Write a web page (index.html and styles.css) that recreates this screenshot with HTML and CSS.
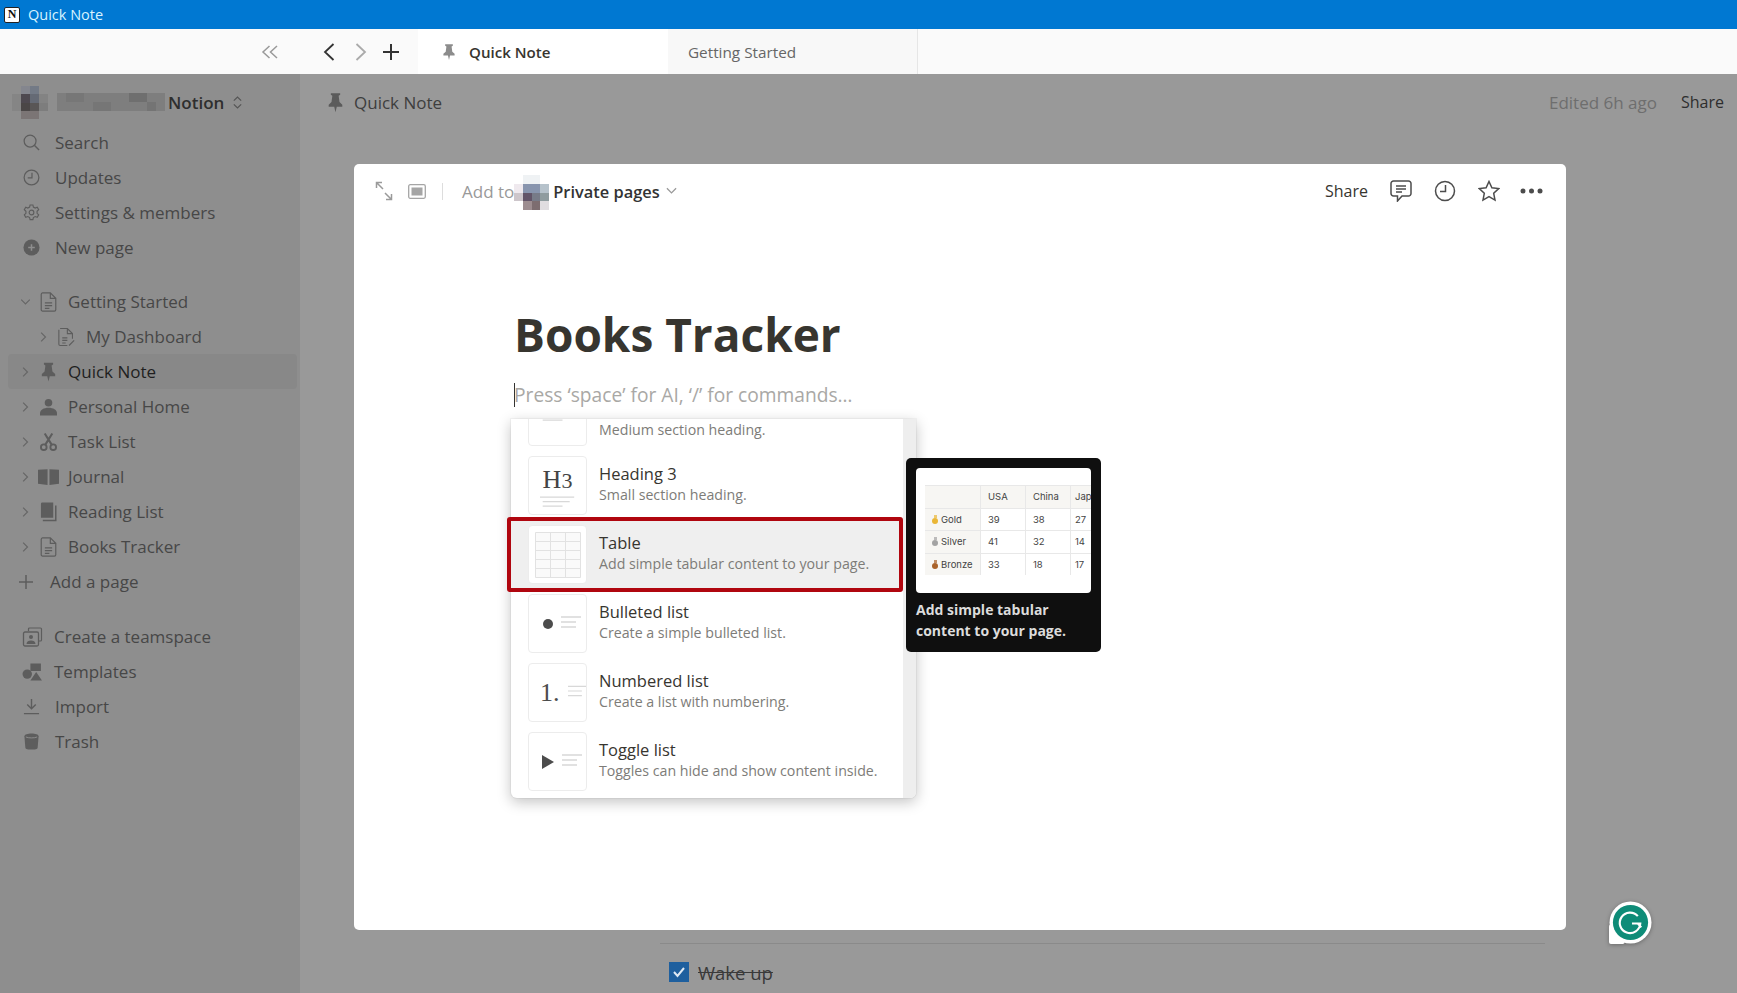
FILE: index.html
```html
<!DOCTYPE html>
<html lang="en">
<head>
<meta charset="utf-8">
<title>Quick Note</title>
<link rel="stylesheet" href="styles.css">
</head>
<body>
<svg class="defs" width="0" height="0" aria-hidden="true">
  <symbol id="chev" viewBox="0 0 14 14"><path d="M4 1.5 9.5 7 4 12.5" fill="none" stroke="currentColor" stroke-width="1.5"/></symbol>
  <symbol id="pin" viewBox="0 0 20 24"><path d="M4.5 1h11v2l-1.8 1.2 1 7.3 3.3 3V17h-6.5L10 23.5 8.500 17H2v-2.500l3.300-3 1-7.300L4.500 3z" fill="currentColor"/></symbol>
  <symbol id="doc" viewBox="0 0 18 22"><path d="M2.500 1h8.500l6 6v12.500a1.500 1.500 0 0 1-1.500 1.500h-13a1.500 1.500 0 0 1-1.500-1.500v-17A1.500 1.500 0 0 1 2.500 1zM11 1v6h6M5 12h8M5 15h8M5 18h5" fill="none" stroke="currentColor" stroke-width="1.300"/></symbol>
</svg>

<header class="titlebar">
  <span class="logo">N</span>
  <span class="app-title">Quick Note</span>
</header>

<nav class="tabbar">
  <div class="tab-tools">
    <svg class="collapse" viewBox="0 0 18 14"><path d="M8.500 1 2 7l6.500 6M16 1 9.500 7l6.500 6" fill="none" stroke="currentColor" stroke-width="1.500"/></svg>
    <svg class="nav-back" viewBox="0 0 12 18"><path d="M10.500 1 2 9l8.500 8" fill="none" stroke="currentColor" stroke-width="1.800"/></svg>
    <svg class="nav-forward" viewBox="0 0 12 18"><path d="M1.500 1 10 9l-8.500 8" fill="none" stroke="currentColor" stroke-width="1.800"/></svg>
    <svg class="nav-add" viewBox="0 0 18 18"><path d="M9 1v16M1 9h16" fill="none" stroke="currentColor" stroke-width="2"/></svg>
  </div>
  <div class="tab tab-active"><svg class="tab-pin"><use href="#pin"/></svg><span>Quick Note</span></div>
  <div class="tab tab-idle"><span>Getting Started</span></div>
</nav>

<div class="workspace">
  <aside class="sidebar">
    <div class="ws-head">
      <svg class="ws-avatar" viewBox="0 0 4 4" preserveAspectRatio="none" shape-rendering="crispEdges">
        <rect x="1" width="1" height="1" fill="#84868e"/><rect x="2" width="1" height="1" fill="#737a86"/><rect y="1" width="1" height="2" fill="#858585"/>
        <rect x="1" y="1" width="1" height="1" fill="#4e4950"/><rect x="2" y="1" width="1" height="1" fill="#656a75"/>
        <rect x="3" y="1" width="1" height="1" fill="#838383"/><rect x="1" y="2" width="1" height="1" fill="#4a4646"/>
        <rect x="2" y="2" width="1" height="1" fill="#595656"/><rect x="3" y="2" width="1" height="1" fill="#7d7d7d"/><rect x="1" y="3" width="2" height="1" fill="#7b7575"/>
      </svg>
      <svg class="ws-blur" viewBox="0 0 12 2" preserveAspectRatio="none" shape-rendering="crispEdges">
        <rect width="12" height="2" fill="#7e7e7e"/><rect x="1" width="2" height="1" fill="#777"/><rect x="4" y="1" width="2" height="1" fill="#767676"/>
        <rect x="8" width="2" height="1" fill="#6f6f6f"/><rect x="10" y="1" width="1" height="1" fill="#747474"/>
      </svg>
      <span class="ws-name">Notion</span>
      <svg class="ws-updown" viewBox="0 0 12 14"><path d="M2 5l4-4 4 4M2 9l4 4 4-4" fill="none" stroke="currentColor" stroke-width="1.300"/></svg>
    </div>

    <ul class="nav-list">
      <li class="row"><svg class="ico" viewBox="0 0 18 18"><circle cx="7.500" cy="7.500" r="6.300" fill="none" stroke="currentColor" stroke-width="1.300"/><path d="M12 12l5 5" stroke="currentColor" stroke-width="1.500"/></svg><span>Search</span></li>
      <li class="row"><svg class="ico" viewBox="0 0 18 18"><circle cx="9" cy="9" r="7.800" fill="none" stroke="currentColor" stroke-width="1.300"/><path d="M9.500 4v5.500H5" fill="none" stroke="currentColor" stroke-width="1.300"/></svg><span>Updates</span></li>
      <li class="row"><svg class="ico" viewBox="0 0 18 18"><path d="M7.500 1h3l.5 2.300 1.900 1 2.200-.8 1.500 2.600-1.700 1.600v2.200l1.700 1.600-1.500 2.600-2.200-.8-1.900 1-.5 2.300h-3l-.5-2.300-1.900-1-2.200.8-1.500-2.600 1.700-1.600V7.700L1.400 6.100l1.500-2.600 2.200.8 1.900-1z" fill="none" stroke="currentColor" stroke-width="1.200"/><circle cx="9" cy="9" r="2.500" fill="none" stroke="currentColor" stroke-width="1.200"/></svg><span>Settings &amp; members</span></li>
      <li class="row"><svg class="ico" viewBox="0 0 18 18"><circle cx="9" cy="9" r="8.500" fill="currentColor"/><path d="M9 5.500v7M5.500 9h7" stroke="#8e8e8e" stroke-width="1.600"/></svg><span>New page</span></li>
    </ul>

    <ul class="nav-list tree">
      <li class="row tree-row"><svg class="chev chev-open"><use href="#chev"/></svg><svg class="ico-doc"><use href="#doc"/></svg><span>Getting Started</span></li>
      <li class="row tree-row tree-child"><svg class="chev"><use href="#chev"/></svg><svg class="ico-doc" viewBox="0 0 20 22"><path d="M2.500 1h8.500l6 6v6M11 1v6h6M1 2.500v17A1.500 1.500 0 0 0 2.500 21H11M5 12h6M5 15h6M5 18h4M13 21l6-6" fill="none" stroke="currentColor" stroke-width="1.300"/></svg><span>My Dashboard</span></li>
      <li class="row tree-row row-current"><svg class="chev"><use href="#chev"/></svg><svg class="ico-doc"><use href="#pin"/></svg><span>Quick Note</span></li>
      <li class="row tree-row"><svg class="chev"><use href="#chev"/></svg><svg class="ico-doc" viewBox="0 0 18 18"><circle cx="9" cy="4.500" r="4" fill="currentColor"/><path d="M0 18v-2.500C0 12 4 9.800 9 9.800s9 2.200 9 5.700V18z" fill="currentColor"/></svg><span>Personal Home</span></li>
      <li class="row tree-row"><svg class="chev"><use href="#chev"/></svg><svg class="ico-doc" viewBox="0 0 18 20"><circle cx="4" cy="15.500" r="3" fill="none" stroke="currentColor" stroke-width="2"/><circle cx="14" cy="15.500" r="3" fill="none" stroke="currentColor" stroke-width="2"/><path d="M5.500 13 13 1M12.500 13 5 1" stroke="currentColor" stroke-width="2.200"/></svg><span>Task List</span></li>
      <li class="row tree-row"><svg class="chev"><use href="#chev"/></svg><svg class="ico-doc ico-wide" viewBox="0 0 22 18"><path d="M0 1.500 10 1v16.500L0 16zM12 1l10 .5V16l-10 1.500z" fill="currentColor"/></svg><span>Journal</span></li>
      <li class="row tree-row"><svg class="chev"><use href="#chev"/></svg><svg class="ico-doc" viewBox="0 0 18 20"><path d="M1 1.500A1.500 1.500 0 0 1 2.500 0H14v16H1z" fill="currentColor"/><path d="M16.700 3v16H3" fill="none" stroke="currentColor" stroke-width="1.600"/></svg><span>Reading List</span></li>
      <li class="row tree-row"><svg class="chev"><use href="#chev"/></svg><svg class="ico-doc"><use href="#doc"/></svg><span>Books Tracker</span></li>
      <li class="row add-row"><svg class="add-plus" viewBox="0 0 14 14"><path d="M7 0v14M0 7h14" stroke="currentColor" stroke-width="1.500"/></svg><span>Add a page</span></li>
    </ul>

    <ul class="nav-list extras">
      <li class="row"><svg class="ico ico-lg" viewBox="0 0 20 20"><path d="M6 4V2a1 1 0 0 1 1-1h11a1 1 0 0 1 1 1v11a1 1 0 0 1-1 1h-2" fill="none" stroke="currentColor" stroke-width="1.200"/><rect x="1" y="5" width="15" height="14" rx="1.500" fill="none" stroke="currentColor" stroke-width="1.300"/><circle cx="8.500" cy="10" r="2" fill="currentColor"/><path d="M4 17c0-2.500 2-3.500 4.500-3.500S13 14.500 13 17z" fill="currentColor"/></svg><span>Create a teamspace</span></li>
      <li class="row"><svg class="ico ico-lg" viewBox="0 0 20 18"><circle cx="5" cy="11" r="4.500" fill="currentColor"/><path d="M8 1h10v7H8zM13.500 9 19 17H8z" fill="currentColor"/></svg><span>Templates</span></li>
      <li class="row"><svg class="ico" viewBox="0 0 18 18"><path d="M9 1v10M4.500 7 9 11.500 13.500 7M1 16.500h16" fill="none" stroke="currentColor" stroke-width="1.500"/></svg><span>Import</span></li>
      <li class="row"><svg class="ico" viewBox="0 0 18 18"><path d="M1.500 3.500C1.500 1.500 5 .5 9 .5s7.500 1 7.500 3l-1 12c-.2 1.700-3 2-6.500 2s-6.300-.3-6.500-2z" fill="currentColor"/><path d="M3 4.200c1.500.7 3.500 1 6 1s4.500-.3 6-1" fill="none" stroke="#8e8e8e" stroke-width="1"/></svg><span>Trash</span></li>
    </ul>
  </aside>

  <main class="content">
    <div class="topbar">
      <svg class="top-pin"><use href="#pin"/></svg>
      <span class="crumb">Quick Note</span>
      <span class="edited">Edited 6h ago</span>
      <span class="top-share">Share</span>
    </div>
    <div class="behind">
      <hr class="behind-rule">
      <div class="todo">
        <svg class="todo-box" viewBox="0 0 20 20"><rect width="20" height="20" fill="#1e5f9e"/><path d="M5 10l3.500 4L15 6" fill="none" stroke="#dfe9f3" stroke-width="2"/></svg>
        <s>Wake up</s>
      </div>
    </div>
  </main>

  <section class="modal">
    <div class="modal-head">
      <svg class="m-expand" viewBox="0 0 18 20"><path d="M8 8 1.500 1.500M1.500 7V1.500H7M10 12l6.500 6.500M16.500 13v5.500H11" fill="none" stroke="currentColor" stroke-width="1.500"/></svg>
      <svg class="m-panel" viewBox="0 0 18 15"><rect x=".7" y=".7" width="16.600" height="13.600" rx="1.500" fill="none" stroke="currentColor" stroke-width="1.300"/><rect x="3.500" y="3.500" width="11" height="8" fill="currentColor"/></svg>
      <i class="m-sep"></i>
      <span class="m-addto">Add to</span>
      <svg class="m-avatar" viewBox="0 0 4 4" shape-rendering="crispEdges">
        <rect x="1" width="2" height="1" fill="#eff2f4"/><rect y="1" width="1" height="1" fill="#efe9ee"/><rect x="1" y="1" width="2" height="1" fill="#8895ae"/><rect x="3" y="1" width="1" height="1" fill="#b6c2cb"/>
        <rect y="2" width="1" height="1" fill="#cdc6cb"/><rect x="1" y="2" width="1" height="1" fill="#625468"/><rect x="2" y="2" width="1" height="1" fill="#777b88"/><rect x="3" y="2" width="1" height="1" fill="#8f9c9f"/>
        <rect x="1" y="3" width="1" height="1" fill="#9d8d90"/><rect x="2" y="3" width="1" height="1" fill="#7d6d70"/><rect x="3" y="3" width="1" height="1" fill="#e0dde0"/>
      </svg>
      <span class="m-private">Private pages</span>
      <svg class="m-caret" viewBox="0 0 12 8"><path d="M1 1l5 5 5-5" fill="none" stroke="currentColor" stroke-width="1.400"/></svg>
      <span class="m-share">Share</span>
      <svg class="m-action" viewBox="0 0 22 22"><path d="M3.500 1h15A2.500 2.500 0 0 1 21 3.500v10a2.500 2.500 0 0 1-2.500 2.500H12l-4.500 5v-5h-4A2.500 2.500 0 0 1 1 13.500v-10A2.500 2.500 0 0 1 3.500 1zM6 6h10M6 9h10M6 12h6" fill="none" stroke="currentColor" stroke-width="1.500"/></svg>
      <svg class="m-action" viewBox="0 0 22 22"><circle cx="11" cy="11" r="9.500" fill="none" stroke="currentColor" stroke-width="1.500"/><path d="M11.500 5v6.500H6" fill="none" stroke="currentColor" stroke-width="1.500"/></svg>
      <svg class="m-action" viewBox="0 0 22 22"><path d="M11 1.500l2.900 6.300 6.800.8-5 4.700 1.300 6.800-6-3.400-6 3.400 1.300-6.800-5-4.700 6.800-.8z" fill="none" stroke="currentColor" stroke-width="1.500"/></svg>
      <svg class="m-dots" viewBox="0 0 23 6"><circle cx="3" cy="3" r="2.500" fill="currentColor"/><circle cx="11.500" cy="3" r="2.500" fill="currentColor"/><circle cx="20" cy="3" r="2.500" fill="currentColor"/></svg>
    </div>
    <div class="page">
      <h1 class="page-title">Books Tracker</h1>
      <p class="placeholder">Press ‘space’ for AI, ‘/’ for commands…</p>
    </div>

    <div class="menu">
      <div class="menu-scroll">
        <div class="item item-cut">
          <div class="thumb"><svg class="thumb-lines" viewBox="0 0 40 14"><path d="M0 1h38M3 6h30M3 11h22" stroke="#d8d8d8" stroke-width="1.200"/></svg></div>
          <div class="item-text item-text-cut"><small>Medium section heading.</small></div>
        </div>
        <div class="item">
          <div class="thumb thumb-h3"><span>H<em>3</em></span><svg class="thumb-lines" viewBox="0 0 40 14"><path d="M0 1h38M3 6h30M3 11h22" stroke="#d8d8d8" stroke-width="1.200"/></svg></div>
          <div class="item-text"><b>Heading 3</b><small>Small section heading.</small></div>
        </div>
        <div class="item item-on">
          <div class="thumb"><svg class="thumb-table" viewBox="0 0 46 46"><path d="M.5.500h45v45H.500zM0 9.500h46M0 18.500h46M0 27.500h46M0 36.500h46M15.500 0v46M30.500 0v46" fill="#fafafa" stroke="#e2e2e2"/></svg></div>
          <div class="item-text"><b>Table</b><small>Add simple tabular content to your page.</small></div>
        </div>
        <div class="item">
          <div class="thumb thumb-row"><i class="bullet"></i><svg class="side-lines" viewBox="0 0 20 12"><path d="M0 1h20M0 6h15M0 11h15" stroke="#d8d8d8" stroke-width="1.300"/></svg></div>
          <div class="item-text"><b>Bulleted list</b><small>Create a simple bulleted list.</small></div>
        </div>
        <div class="item">
          <div class="thumb thumb-row"><span class="numeral">1.</span><svg class="side-lines" viewBox="0 0 20 12"><path d="M0 1h20M0 6h15M0 11h15" stroke="#d8d8d8" stroke-width="1.300"/></svg></div>
          <div class="item-text"><b>Numbered list</b><small>Create a list with numbering.</small></div>
        </div>
        <div class="item">
          <div class="thumb thumb-row"><svg class="tri" viewBox="0 0 12 14"><path d="M0 0l12 7-12 7z" fill="#4c4c4c"/></svg><svg class="side-lines" viewBox="0 0 20 12"><path d="M0 1h20M0 6h15M0 11h15" stroke="#d8d8d8" stroke-width="1.300"/></svg></div>
          <div class="item-text"><b>Toggle list</b><small>Toggles can hide and show content inside.</small></div>
        </div>
      </div>
      <div class="menu-track"></div>
    </div>
    <div class="menu-mark"></div>

    <aside class="tip">
      <div class="tip-shot">
        <div class="mini">
          <span class="mc mh"></span><span class="mc mh">USA</span><span class="mc mh">China</span><span class="mc mh">Jap</span>
          <span class="mc mh"><i class="medal m-gold"></i>Gold</span><span class="mc">39</span><span class="mc">38</span><span class="mc">27</span>
          <span class="mc mh"><i class="medal m-silver"></i>Silver</span><span class="mc">41</span><span class="mc">32</span><span class="mc">14</span>
          <span class="mc mh"><i class="medal m-bronze"></i>Bronze</span><span class="mc">33</span><span class="mc">18</span><span class="mc">17</span>
        </div>
      </div>
      <p class="tip-text">Add simple tabular content to your page.</p>
    </aside>
  </section>

  <div class="grammarly">
    <svg viewBox="0 0 44 44"><circle cx="22" cy="22" r="21.500" fill="#fff"/><rect x="0" y="24" width="16" height="20" rx="2" fill="#fff"/><circle cx="22" cy="22" r="18" fill="#0e8c78"/><path d="M29.500 15.500A10.500 10.500 0 1 0 32 23H23.500m6 0 3.500 4" fill="none" stroke="#fff" stroke-width="2.200"/></svg>
  </div>
</div>
</body>
</html>
```
FILE: styles.css
```css
* { box-sizing: border-box; }
html, body { margin: 0; height: 100%; }
body {
  width: 1737px; height: 993px; overflow: hidden;
  display: flex; flex-direction: column;
  font-family: "Open Sans", "Noto Sans", sans-serif;
  color: #37352f; background: #999;
}
.defs { position: absolute; }
ul { list-style: none; margin: 0; padding: 0; }

.titlebar { height: 29px; flex: none; background: #0078d2; display: flex; align-items: center; padding-left: 4px; gap: 8px; }
.logo {
  width: 16px; height: 16px; background: #fff; border: 1.500px solid #222; border-radius: 2px;
  font: bold 12px/13px "Liberation Serif", serif; color: #111; text-align: center;
}
.app-title { font-size: 14.500px; color: #d8f3ff; }

.tabbar { height: 45px; flex: none; display: flex; background: #fafafa; }
.tab-tools { width: 418px; display: flex; align-items: center; padding-left: 261px; color: #444; }
.collapse { width: 18px; height: 14px; color: #999; }
.nav-back { width: 12px; height: 18px; margin-left: 44px; color: #333; }
.nav-forward { width: 12px; height: 18px; margin-left: 20px; color: #aaa; }
.nav-add { width: 18px; height: 18px; margin-left: 15px; color: #333; }
.tab { width: 250px; display: flex; align-items: center; font-size: 15.300px; }
.tab-active { background: #fff; padding-left: 24px; gap: 13px; color: #37352f; font-weight: 600; font-size: 15.100px; }
.tab-pin { width: 14px; height: 18px; color: #8c8c8c; }
.tab-idle { padding-left: 20px; color: #666; border-right: 1px solid #e6e6e6; background: #f8f8f8; }

.workspace { flex: 1; display: flex; min-height: 0; position: relative; }

.sidebar { width: 300px; flex: none; background: #8e8e8e; color: #474747; font-size: 17px; padding: 0 3px 0 8px; }
.ws-head { height: 51px; display: flex; align-items: center; padding: 5px 0 0 4px; }
.ws-avatar { width: 36px; height: 33px; flex: none; }
.ws-blur { width: 108px; height: 18px; margin-left: 9px; }
.ws-name { margin-left: 3px; font-weight: 600; color: #2e2e2e; }
.ws-updown { width: 11px; height: 13px; margin-left: 8px; color: #555; }

.row { height: 35px; display: flex; align-items: center; gap: 15px; padding-left: 15px; white-space: nowrap; }
.ico { width: 17px; height: 17px; flex: none; color: #5d5d5d; }
.ico-lg { width: 21px; height: 20px; margin-right: -4px; margin-left: -1px; }
.tree { margin-top: 19px; }
.extras { margin-top: 20px; }
.tree-row { padding-left: 12px; gap: 0; }
.chev { width: 11px; height: 12px; color: #666; flex: none; }
.chev-open { transform: rotate(90deg); }
.ico-doc { width: 17px; height: 20px; margin: 0 11px 0 9px; color: #5d5d5d; flex: none; }
.ico-wide { width: 21px; margin: 0 9px 0 7px; }
.tree-child { padding-left: 30px; }
.row-current { background: #888; color: #1f1f1f; border-radius: 4px; font-weight: 500; }
.add-row { padding-left: 11px; gap: 17px; }
.add-plus { width: 14px; height: 14px; color: #5d5d5d; }

.content { flex: 1; display: flex; flex-direction: column; justify-content: space-between; min-width: 0; }
.topbar { height: 58px; display: flex; align-items: center; padding: 0 13px 2px 27px; font-size: 17px; }
.top-pin { width: 17px; height: 21px; color: #5b5b5b; }
.crumb { margin-left: 10px; color: #3e3e3e; flex: 1; }
.edited { color: #6e6e6e; }
.top-share { margin-left: 24px; color: #2e2e2e; font-size: 16px; }
.behind { padding: 0 192px 8px 360px; }
.behind-rule { border: 0; border-top: 1px solid #8a8a8a; margin: 0 0 15px; }
.todo { display: flex; align-items: center; gap: 9px; padding-left: 9px; font-size: 18.500px; color: #3a3a3a; height: 26px; }
.todo-box { width: 20px; height: 20px; }

.modal { position: absolute; left: 354px; top: 90px; width: 1212px; height: 766px; background: #fff; border-radius: 5px; }
.modal-head { height: 54px; display: flex; align-items: center; padding: 0 23px 0 21px; color: #555; }
.m-expand { width: 18px; height: 20px; color: #9a9a9a; }
.m-panel { width: 18px; height: 15px; margin-left: 15px; color: #a5a5a5; }
.m-sep { width: 1px; height: 17px; margin-left: 16px; background: #ddd; }
.m-addto { margin-left: 19px; font-size: 17px; color: #999; }
.m-avatar { width: 35px; height: 35px; margin-top: 2px; }
.m-private { margin-left: 4px; font-size: 16.400px; font-weight: 600; color: #333; }
.m-caret { width: 11px; height: 8px; margin-left: 6px; color: #999; }
.m-share { margin-left: auto; font-size: 16px; color: #37352f; }
.m-action { width: 22px; height: 22px; margin-left: 22px; color: #4c4c4c; flex: none; }
.m-dots { width: 23px; height: 6px; margin-left: 20px; color: #4c4c4c; }

.page { padding: 85px 0 0 160px; }
.page-title { margin: 0; font-size: 46px; line-height: 62px; font-weight: 700; color: #37352f; }
.placeholder { margin: 12px 0 0; height: 36px; line-height: 36px; font-size: 19.200px; color: #a9a8a5; position: relative; }
.placeholder::before { content: ""; position: absolute; left: 0; top: 6px; width: 1px; height: 24px; background: #333; }

.menu { position: absolute; left: 157px; top: 255px; width: 405px; height: 379px; background: #fff; border-radius: 0 0 6px 6px; box-shadow: 0 0 0 1px rgba(15,15,15,.04), 0 4px 14px rgba(15,15,15,.25); display: flex; overflow: hidden; }
.menu-scroll { width: 392px; }
.menu-track { width: 13px; background: #eee; }
.item { height: 69px; display: flex; align-items: center; padding-left: 17px; gap: 12px; }
.item-cut { margin-top: -37px; }
.item-on { background: #efefef; }
.thumb { width: 59px; height: 59px; flex: none; background: #fff; border: 1px solid #ececec; border-radius: 4px; display: flex; flex-direction: column; align-items: center; justify-content: center; }
.thumb-lines { width: 36px; height: 13px; }
.thumb-h3 { color: #444; font: 26px/30px "Liberation Serif", serif; padding-top: 2px; }
.thumb-h3 em { font-style: normal; font-size: 22px; }
.thumb-table { width: 46px; height: 46px; }
.thumb-row { flex-direction: row; gap: 8px; padding-left: 8px; }
.bullet { width: 10px; height: 10px; border-radius: 50%; background: #4c4c4c; }
.numeral { font: 26px/30px "Liberation Serif", serif; color: #4c4c4c; margin-left: 3px; }
.tri { width: 12px; height: 14px; }
.side-lines { width: 20px; height: 12px; margin-top: -4px; }
.item-text { display: flex; flex-direction: column; padding-bottom: 3px; }
.item-text-cut { padding: 26px 0 0; }
.item-text b { font-weight: 400; font-size: 16.500px; line-height: 22px; color: #37352f; }
.item-text small { font-size: 14.200px; line-height: 20px; color: #7d7c78; white-space: nowrap; }

.menu-mark { position: absolute; left: 153px; top: 353px; width: 396px; height: 75px; border: 4px solid #b0060f; border-radius: 3px; }

.tip { position: absolute; left: 552px; top: 294px; width: 195px; height: 194px; background: #0f0f0f; border-radius: 5px; padding: 10px; }
.tip-shot { height: 125px; background: #fff; border-radius: 4px; padding: 17px 0 0 9px; overflow: hidden; }
.mini { display: grid; grid-template-columns: 56px 45px 45px 20px; grid-auto-rows: 22.500px; font-family: "Inter", sans-serif; font-size: 9.500px; color: #444; width: 166px; }
.mc { display: flex; align-items: center; padding-left: 7px; border: solid #e8e8e8; border-width: 1px 1px 0 0; white-space: nowrap; }
.mc:nth-child(4n) { border-right: 0; padding-left: 4px; }
.mh { background: #f7f6f3; padding-left: 7px; }
.medal { position: relative; width: 6px; height: 6px; margin-top: 3px; border-radius: 50%; margin-right: 3px; flex: none; }
.medal::before { content: ""; position: absolute; left: 1.500px; top: -3px; width: 3px; height: 3px; background: inherit; opacity: .7; }
.m-gold { background: #eab635; }
.m-silver { background: #a3a3a3; }
.m-bronze { background: #a9622a; }
.tip-text { margin: 6px 0 0; font-size: 14px; line-height: 21px; font-weight: 700; color: #dcdcdc; }

.grammarly { position: absolute; left: 1609px; top: 827px; width: 43px; height: 43px; filter: drop-shadow(0 1px 2px rgba(0,0,0,.3)); }
.grammarly svg { display: block; width: 43px; height: 43px; }
```
